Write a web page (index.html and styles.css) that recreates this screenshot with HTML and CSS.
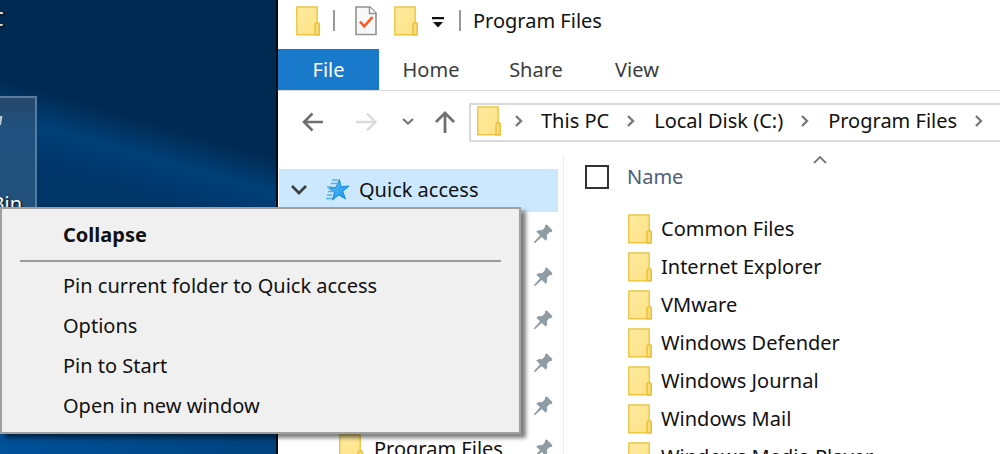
FILE: index.html
```
<!DOCTYPE html>
<html lang="en">
<head>
<meta charset="utf-8">
<meta name="viewport" content="width=device-width, initial-scale=1">
<title>Program Files</title>
<link rel="stylesheet" href="styles.css">
</head>
<body>
<svg class="defs" aria-hidden="true">
  <defs>
    <linearGradient id="folder-fill" x1="0" y1="0" x2="1" y2="1">
      <stop offset="0" stop-color="#ffeba0"/><stop offset="1" stop-color="#fee184"/>
    </linearGradient>
    <linearGradient id="star-fill" x1="0" y1="0" x2="1" y2="1">
      <stop offset="0" stop-color="#5cc0fa"/><stop offset="1" stop-color="#1590e6"/>
    </linearGradient>
    <symbol id="folder" viewBox="0 0 24 30">
      <path d="M.8 1h20.4v16l1.900 1v10.800H.8z" fill="url(#folder-fill)" stroke="#ecc644" stroke-width="1.4"/>
      <path d="M19 28.800V18.600q0-1.400 1.400-1.600l1.400-.4q1.400 0 1.400 1.500v10.700z" fill="#fbdc76" stroke="#e8bf38" stroke-width="1.400"/>
    </symbol>
    <symbol id="pin" viewBox="0 0 20 20">
      <path d="M12.200 1.200q1.200-1.200 2.400 0l4.200 4.200q1.200 1.200 0 2.400-.9.700-2 .3l-3 3q1.200 3.400-1 5.700L8.700 13 1.800 19.200.8 18.200 7 11.300 3.200 7.500q2.400-2.300 5.800-1.200l3-3q-.5-1.200.2-2.100z" fill="#909ca3"/>
    </symbol>
    <symbol id="right" viewBox="0 0 10 14">
      <path d="M2 2l5 5-5 5" fill="none" stroke="#777" stroke-width="2.300"/>
    </symbol>
  </defs>
</svg>
<main class="desktop">
  <section class="icons" aria-label="Desktop icons">
    <span class="pc-label">C</span>
    <div class="bin-tile"><span class="bin-label">Bin</span><svg class="bin-art" viewBox="0 0 4 12"><path d="M0 1h2.500L1 10H0z" fill="#b8c8d4"/></svg></div>
  </section>

  <section class="window">
    <header class="titlebar">
      <svg class="folder"><use href="#folder"/></svg>
      <span class="bar"></span>
      <button class="bare properties" aria-label="Properties">
        <svg width="24" height="30" viewBox="0 0 24 30"><path d="M2 1h14l6 6v21.500H2z" fill="#f8f8f9" stroke="#929292" stroke-width="1.600"/><path d="M15.500 1v6.500H22" fill="#fff" stroke="#929292" stroke-width="1.400"/><path d="M6 15.500l4.200 4.800 8.300-9.300" fill="none" stroke="#f9591c" stroke-width="2.500"/></svg>
      </button>
      <button class="bare" aria-label="New folder"><svg class="folder"><use href="#folder"/></svg></button>
      <button class="bare customize" aria-label="Customize toolbar"><svg width="14" height="14" viewBox="0 0 14 14"><path d="M1 1h12v2.200H1zM2 6h10l-5 5.500z" fill="#111"/></svg></button>
      <span class="bar"></span>
      <h1 class="title">Program Files</h1>
    </header>
    <nav class="ribbon">
      <button class="tab file">File</button>
      <button class="tab home">Home</button>
      <button class="tab share">Share</button>
      <button class="tab view">View</button>
    </nav>
    <div class="toolbar">
      <button class="bare" aria-label="Back"><svg width="24" height="22" viewBox="0 0 24 22"><path d="M22 11H3M11.500 2.500L3 11l8.500 8.500" fill="none" stroke="#707070" stroke-width="2.600"/></svg></button>
      <button class="bare forward" aria-label="Forward"><svg width="24" height="22" viewBox="0 0 24 22"><path d="M1 11h19M12 2.500l8.500 8.500-8.500 8.500" fill="none" stroke="#dadada" stroke-width="2.400"/></svg></button>
      <button class="bare recent" aria-label="Recent locations"><svg width="14" height="10" viewBox="0 0 14 10"><path d="M2 2l5 4.500L12 2" fill="none" stroke="#777" stroke-width="2.200"/></svg></button>
      <button class="bare up" aria-label="Up"><svg width="22" height="24" viewBox="0 0 22 24"><path d="M11 23V3M2 12l9-9 9 9" fill="none" stroke="#707070" stroke-width="2.800"/></svg></button>
      <div class="address">
        <svg class="folder"><use href="#folder"/></svg>
        <svg class="sep"><use href="#right"/></svg>
        <a class="crumb" href="#pc">This PC</a>
        <svg class="sep"><use href="#right"/></svg>
        <a class="crumb" href="#disk">Local Disk (C:)</a>
        <svg class="sep"><use href="#right"/></svg>
        <a class="crumb" href="#files">Program Files</a>
        <svg class="sep"><use href="#right"/></svg>
      </div>
    </div>
    <div class="content">
      <aside class="tree">
        <div class="row selected">
          <svg class="chevron" width="18" height="12" viewBox="0 0 18 12"><path d="M2 2l7 7 7-7" fill="none" stroke="#404040" stroke-width="2.800"/></svg>
          <svg class="star" width="26" height="24" viewBox="0 0 26 24"><path d="M14.500 1.500l1.500 7.300 8-.8-6.200 5.400 2.700 7.600-6.700-4-6.300 5 1.800-7.700-5.600-4.300 7.300-.7z" fill="url(#star-fill)" stroke="#168cdf" stroke-width="1"/><path d="M7 2h6M6 5.500h7M2 9h5M3 13.500h4M2 17h5M1 20.500h6" stroke="#58afe7" stroke-width="1.300"/></svg>
          <a class="quick" href="#quick">Quick access</a>
        </div>
        <div class="row"><svg class="pin"><use href="#pin"/></svg></div>
        <div class="row"><svg class="pin"><use href="#pin"/></svg></div>
        <div class="row"><svg class="pin"><use href="#pin"/></svg></div>
        <div class="row"><svg class="pin"><use href="#pin"/></svg></div>
        <div class="row"><svg class="pin"><use href="#pin"/></svg></div>
        <div class="row"><svg class="folder"><use href="#folder"/></svg><a class="tree-name" href="#files">Program Files</a><svg class="pin"><use href="#pin"/></svg></div>
      </aside>
      <section class="listing" id="files">
        <div class="columns">
          <input class="check" type="checkbox" aria-label="Select all">
          <button class="bare name">Name</button>
          <svg class="sort" width="16" height="10" viewBox="0 0 16 10"><path d="M2 8l6-6 6 6" fill="none" stroke="#777" stroke-width="1.800"/></svg>
        </div>
        <ul class="files">
          <li><svg class="folder"><use href="#folder"/></svg><a href="#common">Common Files</a></li>
          <li><svg class="folder"><use href="#folder"/></svg><a href="#ie">Internet Explorer</a></li>
          <li><svg class="folder"><use href="#folder"/></svg><a href="#vmware">VMware</a></li>
          <li><svg class="folder"><use href="#folder"/></svg><a href="#defender">Windows Defender</a></li>
          <li><svg class="folder"><use href="#folder"/></svg><a href="#journal">Windows Journal</a></li>
          <li><svg class="folder"><use href="#folder"/></svg><a href="#mail">Windows Mail</a></li>
          <li><svg class="folder"><use href="#folder"/></svg><a href="#media">Windows Media Player</a></li>
        </ul>
      </section>
    </div>
  </section>

  <div class="menu" role="menu">
    <button class="item default" role="menuitem">Collapse</button>
    <hr class="rule">
    <button class="item" role="menuitem">Pin current folder to Quick access</button>
    <button class="item" role="menuitem">Options</button>
    <button class="item" role="menuitem">Pin to Start</button>
    <button class="item" role="menuitem">Open in new window</button>
  </div>
</main>
</body>
</html>
```

FILE: styles.css
```
* { box-sizing: border-box; }
body {
  margin: 0;
  font-family: "Noto Sans", "Open Sans", sans-serif;
  font-size: 20px;
  line-height: 28px;
  color: #111;
}
button { font: inherit; color: inherit; border: 0; padding: 0; background: none; white-space: nowrap; }
a { color: inherit; text-decoration: none; white-space: nowrap; }
svg { display: block; flex: none; }
.defs { position: absolute; width: 0; height: 0; }
.bare { display: flex; flex: none; }
.folder { width: 24px; height: 30px; }

.desktop {
  position: relative;
  display: flex;
  height: 100vh;
  overflow: hidden;
  background: #003467;
}
.icons {
  position: relative;
  flex: none;
  width: 278px;
  overflow: hidden;
  border-right: 2px solid #080c12;
  color: #fff;
  background:
    linear-gradient(196deg, #002a52 0, #002a52 152px, #004078 186px, #003568 225px, #003568 300px, #00427c 430px, #00529b 100%);
}
.pc-label { position: absolute; left: -9px; top: 5px; text-shadow: 1px 1px 2px #000; }
.bin-tile {
  position: absolute;
  left: -60px;
  top: 96px;
  width: 97px;
  height: 130px;
  border: 2px solid #557d9f;
  background: linear-gradient(#264869 0, #20507e 28px, #22517a 100%);
}
.bin-label { position: absolute; right: 13px; top: 92px; text-shadow: 1px 1px 2px #000; }
.bin-art { position: absolute; left: 58px; top: 17px; width: 4px; height: 12px; }

.window { flex: 1; min-width: 0; display: flex; flex-direction: column; background: #fff; }
.titlebar { display: flex; flex: none; align-items: center; height: 49px; padding: 0 0 8px 18px; }
.bar { width: 2px; height: 21px; background: #999; margin-left: 13px; }
.titlebar .properties { margin: 0 16px 0 19px; }
.customize { margin-left: 13px; padding-top: 5px; }
.customize + .bar { margin-left: 14px; }
.title { margin: 0 0 0 12px; font-size: 20px; font-weight: 400; white-space: nowrap; }

.ribbon { display: flex; flex: none; height: 42px; border-bottom: 1px solid #dadada; color: #3b3b3b; }
.tab { flex: none; text-align: center; }
.file { width: 101px; background: #1979ca; color: #fff; }
.home { width: 104px; }
.share { width: 106px; }
.view { width: 96px; }

.toolbar { display: flex; flex: none; align-items: center; height: 64px; padding: 0 0 2px 23px; }
.forward { margin-left: 30px; }
.recent { margin-left: 22px; }
.up { margin-left: 19px; }
.address {
  display: flex;
  flex: 1;
  min-width: 0;
  align-items: center;
  height: 39px;
  margin-left: 13px;
  padding: 0 0 2px 6px;
  border: 2px solid #dadada;
  border-right: 0;
  overflow: hidden;
}
.sep { width: 10px; height: 14px; margin: 0 18px 0 17px; }
.address .folder + .sep { margin: 0 17px 0 13px; }

.content { display: flex; flex: 1; min-height: 0; overflow: hidden; }
.tree { flex: none; width: 286px; padding: 14px 5px 0 1px; border-right: 1px solid #ededed; }
.row { display: flex; align-items: center; height: 43px; padding: 0 5px 0 60px; }
.row.selected { padding: 0 0 2px 11px; background: #cce8ff; }
.star { margin: 0 8px 0 17px; }
.pin { width: 20px; height: 20px; margin-left: auto; }
.tree-name { margin-left: 11px; }
.listing { flex: 1; min-width: 0; padding-left: 21px; }
.columns { display: flex; align-items: center; height: 44px; }
.check { appearance: none; flex: none; width: 24px; height: 24px; margin: 0; border: 2px solid #333; background: #fff; }
.name { margin-left: 18px; color: #4c607a; }
.sort { align-self: flex-start; margin-left: 129px; }
.files { list-style: none; margin: 0; padding: 11px 0 0 43px; }
.files li { display: flex; align-items: center; gap: 9px; height: 38px; }

.menu {
  position: absolute;
  left: 0;
  top: 207px;
  width: 521px;
  padding: 8px 0 6px;
  border: 2px solid #a0a0a0;
  background: #f0f0f0;
  box-shadow: 5px 4px 4px rgba(0, 0, 0, .5);
}
.item { display: block; width: 100%; height: 40px; padding-left: 61px; text-align: left; }
.default { height: 36px; font-weight: 700; }
.rule { height: 2px; margin: 7px 18px 4px; border: 0; background: #9b9b9b; }
```
